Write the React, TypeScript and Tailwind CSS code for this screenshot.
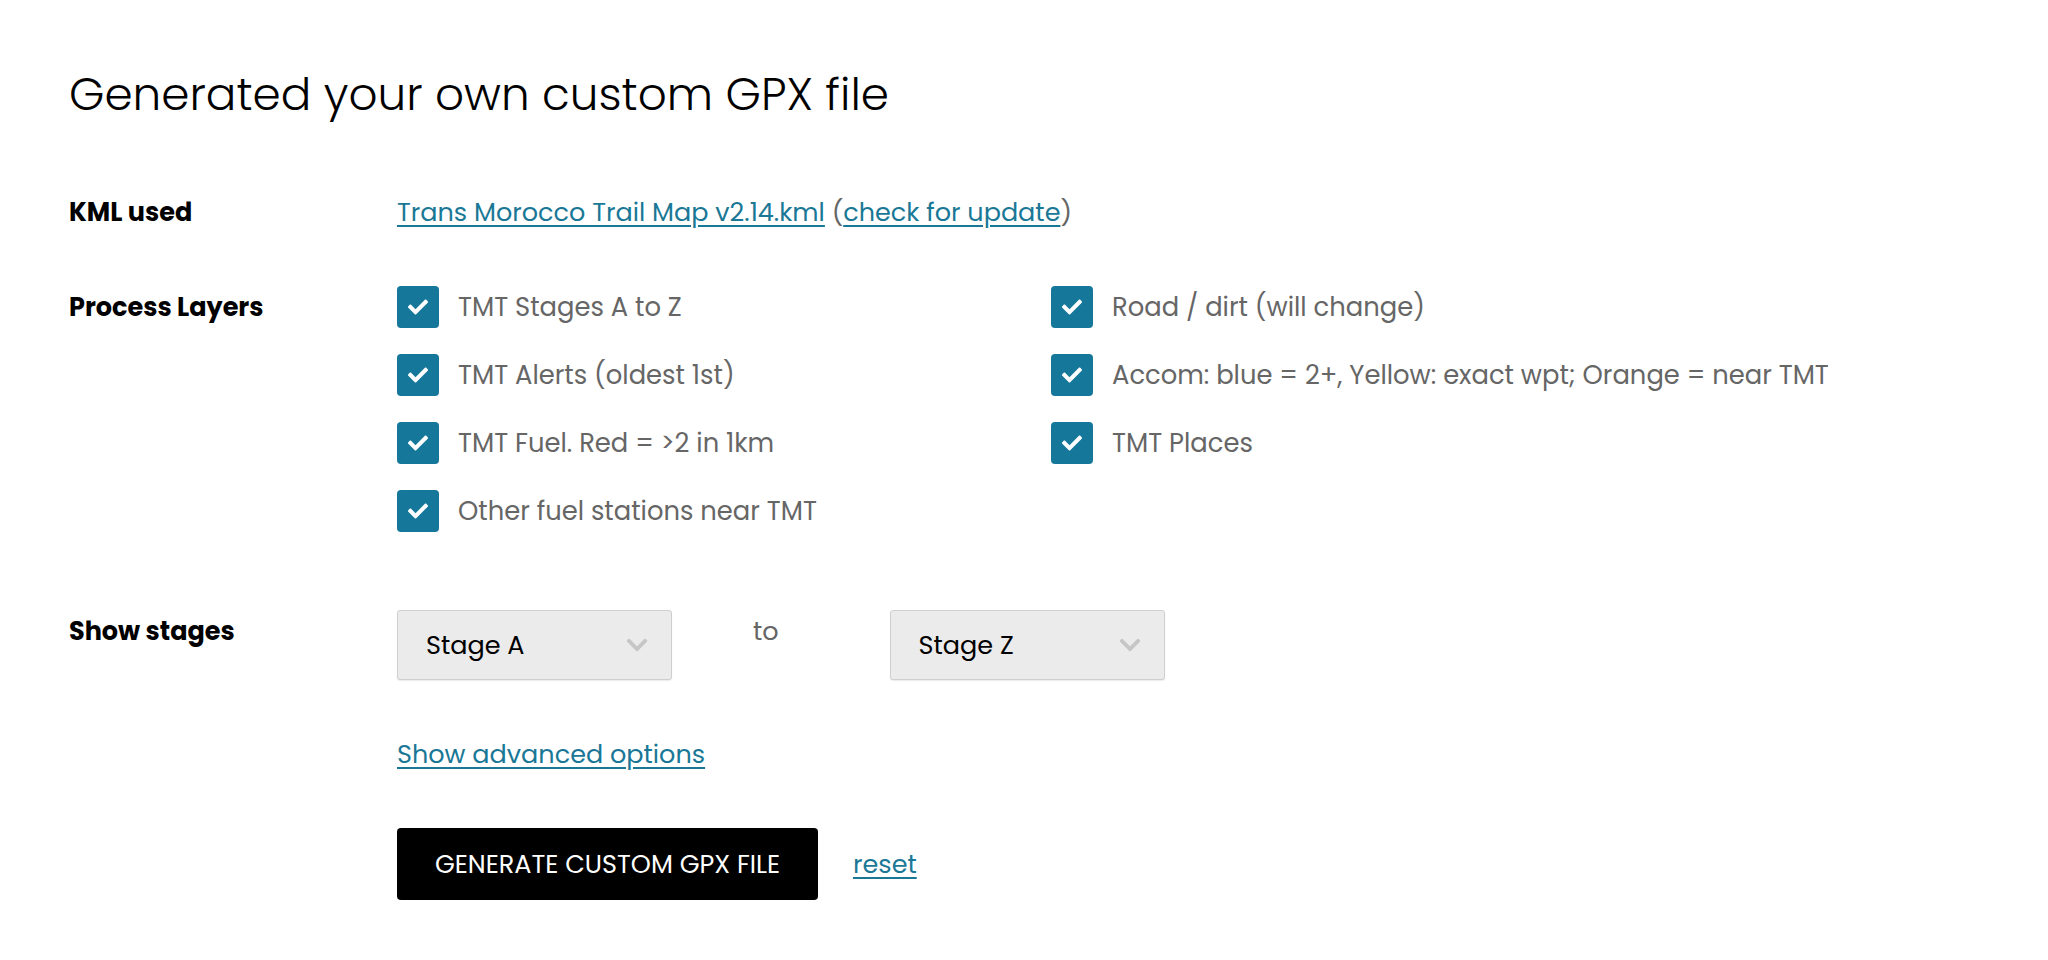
import { FaCheck, FaChevronDown } from 'react-icons/fa'

const LAYERS_LEFT = [
  'TMT Stages A to Z',
  'TMT Alerts (oldest 1st)',
  'TMT Fuel. Red = >2 in 1km',
  'Other fuel stations near TMT',
]

const LAYERS_RIGHT = [
  'Road / dirt (will change)',
  'Accom: blue = 2+, Yellow: exact wpt; Orange = near TMT',
  'TMT Places',
]

function Check({ label }: { label: string }) {
  return (
    <label className="flex h-[42px] items-center gap-[19px]">
      <span className="flex size-[42px] shrink-0 items-center justify-center rounded-[4px] bg-[#15779a] text-white">
        <FaCheck className="size-[20px]" />
      </span>
      <span className="whitespace-nowrap text-[25.8px] leading-[33px] text-[#666]">{label}</span>
    </label>
  )
}

function StageSelect({ value }: { value: string }) {
  return (
    <div className="flex h-[70px] w-[275px] items-center justify-between rounded-[3px] border border-[#cfcfcf] bg-[#ebebeb] pl-[28px] pr-[22px] shadow-[0_1px_1px_rgba(0,0,0,0.08)]">
      <span className="text-[25.5px] leading-[33px] text-black">{value}</span>
      <FaChevronDown className="size-[24px] text-[#c6c6c6]" />
    </div>
  )
}

export default function App() {
  return (
    <div
      className="min-h-screen bg-white pl-[69px] pt-[65px] text-black"
      style={{ fontFamily: '"Poppins", "Open Sans", sans-serif' }}
    >
      <h1 className="text-[45.3px] font-light leading-[58px]">
        Generated your own custom GPX file
      </h1>

      <div className="mt-[73px] flex text-[25.5px] leading-[33px]">
        <div className="w-[328px] font-bold">KML used</div>
        <div className="text-[#666]">
          <a href="#" className="text-[#1a7896] underline underline-offset-[4px]">
            Trans Morocco Trail Map v2.14.kml
          </a>{' '}
          (
          <a href="#" className="text-[#1a7896] underline underline-offset-[4px]">
            check for update
          </a>
          )
        </div>
      </div>

      <div className="mt-[57px] flex">
        <div className="w-[328px] pt-[4.5px] text-[25.5px] font-bold leading-[33px]">
          Process Layers
        </div>
        <div className="grid grid-cols-[654px_auto]">
          <div className="flex flex-col gap-[26px]">
            {LAYERS_LEFT.map((l) => (
              <Check key={l} label={l} />
            ))}
          </div>
          <div className="flex flex-col gap-[26px]">
            {LAYERS_RIGHT.map((l) => (
              <Check key={l} label={l} />
            ))}
          </div>
        </div>
      </div>

      <div className="mt-[78px] flex items-start">
        <div className="w-[328px] pt-[4.5px] text-[25.5px] font-bold leading-[33px]">
          Show stages
        </div>
        <StageSelect value="Stage A" />
        <span className="ml-[81px] mr-[111px] pt-[4.5px] text-[25.5px] leading-[33px] text-[#666]">
          to
        </span>
        <StageSelect value="Stage Z" />
      </div>

      <div className="ml-[328px] mt-[58px] text-[25.5px] leading-[33px]">
        <a href="#" className="text-[#1a7896] underline underline-offset-[4px]">
          Show advanced options
        </a>
      </div>

      <div className="ml-[328px] mt-[57px] flex items-center gap-[35px]">
        <button className="h-[72px] w-[421px] rounded-[4px] bg-black text-[25.5px] uppercase leading-[33px] text-white">
          Generate custom GPX file
        </button>
        <a href="#" className="text-[25.5px] leading-[33px] text-[#1a7896] underline underline-offset-[4px]">
          reset
        </a>
      </div>
    </div>
  )
}
